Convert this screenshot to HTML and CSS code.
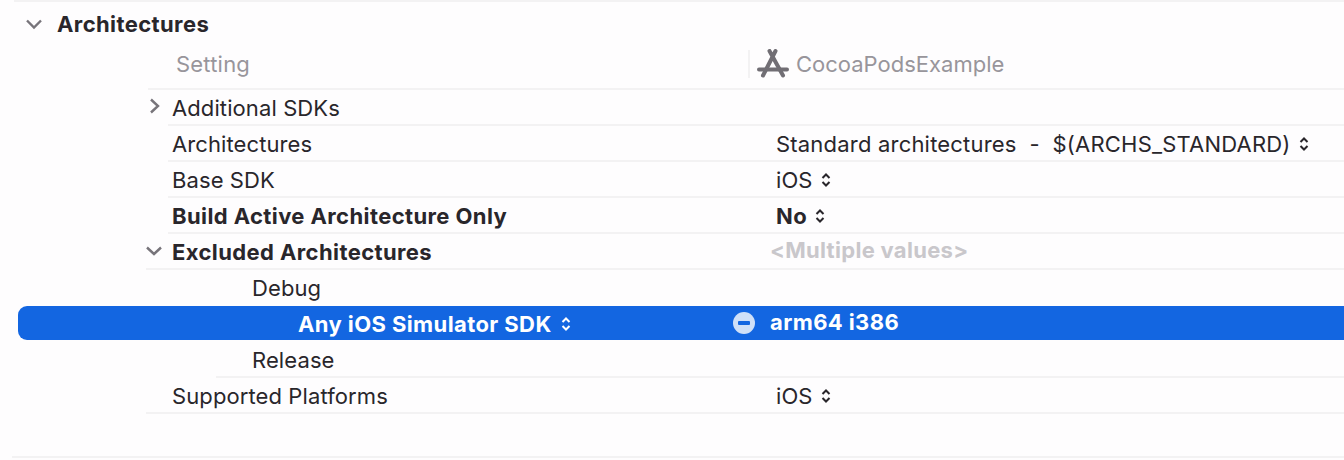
FILE: index.html
```html
<!DOCTYPE html>
<html lang="en">
<head>
<meta charset="utf-8">
<title>Architectures</title>
<link rel="stylesheet" href="styles.css">
</head>
<body>
<main class="page">
  <header class="section">
    <svg class="chev-section" width="18" height="12" viewBox="0 0 18 12"><path d="M2 2.5 9 9.5 16 2.5"/></svg>
    <h2 class="section-title">Architectures</h2>
  </header>
  <div class="columns">
    <span class="col-name">Setting</span>
    <span class="col-target">
      <svg class="app-icon" width="34" height="30" viewBox="0 0 34 30"><path class="thin" d="M19.500 2 7 26.500M13.500 2 27 26.500"/><path class="bar" d="M3 20.500H31"/></svg>
      <span class="target-name">CocoaPodsExample</span>
    </span>
  </div>
  <div class="row row-first">
    <svg class="disc" width="14" height="18" viewBox="0 0 14 18"><path d="M3 2.500 10 9 3 15.500"/></svg>
    <span class="name">Additional SDKs</span>
  </div>
  <div class="row row-top">
    <span class="name">Architectures</span>
    <span class="value value-long">Standard architectures&nbsp; -&nbsp; $(ARCHS_STANDARD)<svg class="updown" width="10" height="16" viewBox="0 0 10 16"><path d="M1.500 6 5 2.500 8.500 6M1.500 10 5 13.500 8.500 10"/></svg></span>
  </div>
  <div class="row row-top">
    <span class="name">Base SDK</span>
    <span class="value">iOS<svg class="updown" width="10" height="16" viewBox="0 0 10 16"><path d="M1.500 6 5 2.500 8.500 6M1.500 10 5 13.500 8.500 10"/></svg></span>
  </div>
  <div class="row row-top bold">
    <span class="name">Build Active Architecture Only</span>
    <span class="value">No<svg class="updown" width="10" height="16" viewBox="0 0 10 16"><path d="M1.500 6 5 2.500 8.500 6M1.500 10 5 13.500 8.500 10"/></svg></span>
  </div>
  <div class="row row-wide bold">
    <svg class="disc-open" width="18" height="12" viewBox="0 0 18 12"><path d="M2 2.500 9 9 16 2.500"/></svg>
    <span class="name">Excluded Architectures</span>
    <span class="value multi">&lt;Multiple values&gt;</span>
  </div>
  <div class="row row-sub">
    <span class="sub-name">Debug</span>
  </div>
  <div class="selected">
    <span class="sel-name">Any iOS Simulator SDK<svg class="updown" width="10" height="16" viewBox="0 0 10 16"><path d="M1.500 6 5 2.500 8.500 6M1.500 10 5 13.500 8.500 10"/></svg></span>
    <svg class="minus" width="22" height="22" viewBox="0 0 22 22"><circle cx="11" cy="11" r="11"/><rect x="5" y="9" width="12" height="4" rx="1"/></svg>
    <span class="sel-value">arm64 i386</span>
  </div>
  <div class="row row-release">
    <span class="sub-name">Release</span>
  </div>
  <div class="row row-wide">
    <span class="name">Supported Platforms</span>
    <span class="value">iOS<svg class="updown" width="10" height="16" viewBox="0 0 10 16"><path d="M1.500 6 5 2.500 8.500 6M1.500 10 5 13.500 8.500 10"/></svg></span>
  </div>
  <div class="bottom-rule"></div>
</main>
</body>
</html>
```
FILE: styles.css
```css
* { box-sizing: border-box; }
html, body { margin: 0; padding: 0; }
body {
  width: 1344px;
  height: 460px;
  overflow: hidden;
  background: #fefdfe;
  font-family: Inter, "Liberation Sans", sans-serif;
  font-size: 22px;
  letter-spacing: 0.1px;
  color: #29262b;
}
svg { display: block; fill: none; flex: none; }
.page { display: flex; flex-direction: column; }

.section {
  height: 44px;
  margin-left: 14px;
  border-top: 2px solid #f3f2f3;
  display: flex;
  align-items: center;
  padding-left: 11px;
  padding-top: 2px;
}
.chev-section { stroke: #77747a; stroke-width: 2.400; }
.section-title { margin: 0 0 0 14px; font-size: 22px; font-weight: 700; letter-spacing: 0.4px; color: #29262b; }

.columns {
  height: 46px;
  margin-left: 148px;
  border-bottom: 2px solid #f3f2f3;
  display: flex;
  align-items: center;
  color: #98959b;
  padding-bottom: 5px;
}
.col-name { width: 600px; padding-left: 28px; letter-spacing: 0.2px; }
.col-target {
  display: flex;
  align-items: center;
  border-left: 2px solid #f3f2f3;
  height: 28px;
  padding-left: 6px;
  gap: 6px;
}
.target-name { letter-spacing: 0; }
.app-icon { stroke: #716e74; }
.app-icon .thin { stroke-width: 4; stroke-linecap: round; }
.app-icon .bar { stroke-width: 4; stroke-linecap: round; }

.row { height: 36px; display: flex; align-items: center; border-bottom: 2px solid #f3f2f3; flex: none; padding-top: 2px; }
.row-first { margin-left: 168px; position: relative; }
.row-top { margin-left: 168px; }
.row-wide { margin-left: 146px; padding-left: 26px; }
.row-sub { margin-left: 146px; padding-left: 106px; border-bottom: 0; padding-top: 0; }
.row-release { margin-left: 216px; padding-left: 36px; }

.name { padding-left: 4px; width: 608px; flex: none; }
.row-wide .name { padding-left: 0; width: 604px; }
.row-first .name { width: auto; }
.sub-name { display: block; }

.disc {
  position: absolute;
  left: -20px;
  top: 7px;
  stroke: #77747a;
  stroke-width: 2.400;
}
.disc-open { stroke: #77747a; stroke-width: 2.400; margin-left: -27px; margin-right: 9px; margin-bottom: 2px; }
.bold { font-weight: 700; letter-spacing: 0.4px; }
.value { display: flex; align-items: center; gap: 8px; }
.value-long { letter-spacing: 0.2px; }
.updown { stroke: currentColor; stroke-width: 2; }
.multi { color: #c9c7cb; margin-left: -6px; margin-bottom: 4px; letter-spacing: 0.3px; }

.selected {
  height: 34px;
  margin: 0 0 2px 18px;
  background: #1366e1;
  border-radius: 9px 0 0 9px;
  color: #fff;
  font-weight: 700;
  letter-spacing: 0.4px;
  display: flex;
  align-items: center;
  flex: none;
}
.sel-name { width: 715px; padding-left: 280px; padding-top: 2px; display: flex; align-items: center; gap: 9px; flex: none; }
.minus circle { fill: #cfe0f8; }
.minus rect { fill: #1366e1; }
.sel-value { margin-left: 15px; margin-bottom: 2px; }

.bottom-rule { height: 2px; margin-top: 42px; margin-left: 12px; background: #f3f2f3; }
```
